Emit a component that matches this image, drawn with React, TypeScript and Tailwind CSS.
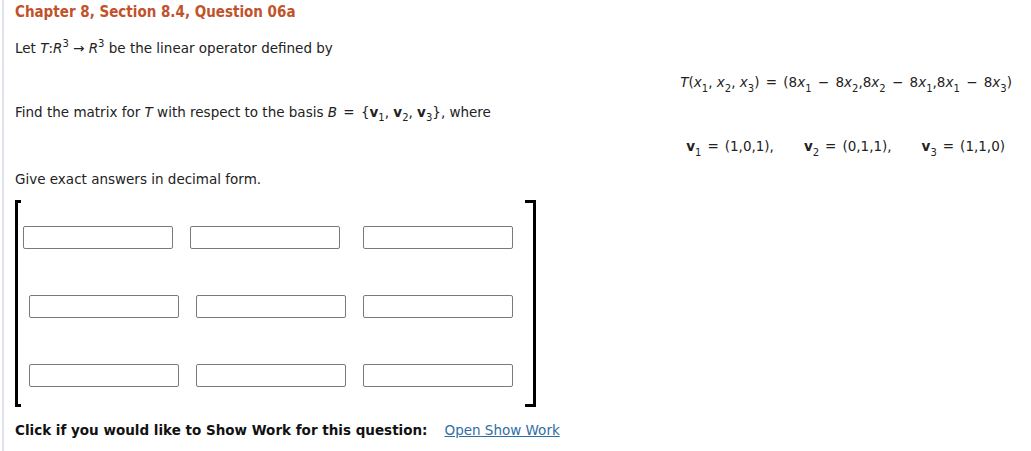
import React from "react";

const font = { fontFamily: '"DejaVu Sans", Verdana, sans-serif' };
const titleFont = { fontFamily: '"DejaVu Sans Condensed", "DejaVu Sans", Verdana, sans-serif' };

function Sub({ children }: { children: React.ReactNode }) {
  return <sub className="text-[10px] relative top-[1px] align-sub leading-none">{children}</sub>;
}
function Sup({ children }: { children: React.ReactNode }) {
  return <sup className="text-[10px] relative -top-[1px] align-super leading-none">{children}</sup>;
}
function Op({ children }: { children: React.ReactNode }) {
  return <span className="mx-[2px]">{children}</span>;
}
function Eq() {
  return <span className="mx-[6px]">=</span>;
}

function Box() {
  return <div className="w-[150px] h-[23px] border border-[#7a7a7a] rounded-[2px] bg-white shrink-0" />;
}

export default function App() {
  return (
    <div className="w-[1031px] h-[451px] bg-white overflow-hidden text-[13.5px] text-[#222]" style={font}>
      <div className="h-full ml-[2px] border-l-2 border-[#dfe2ea] pl-[11px] pr-[19px]">
        <div className="pt-[2px] h-[22px] leading-[20px] text-[15px] font-bold text-[#c0532a]" style={titleFont}>
          Chapter 8, Section 8.4, Question 06a
        </div>
        <div className="mt-[17px] leading-[18px]">
          Let <i>T</i>:<i>R</i><Sup>3</Sup> → <i>R</i><Sup>3</Sup> be the linear operator defined by
        </div>
        <div className="mt-[16px] leading-[18px] text-right">
          <i>T</i>(<i>x</i><Sub>1</Sub>, <i>x</i><Sub>2</Sub>, <i>x</i><Sub>3</Sub>) <Op>=</Op> (8<i>x</i><Sub>1</Sub> <Op>−</Op> 8<i>x</i><Sub>2</Sub>,8<i>x</i><Sub>2</Sub> <Op>−</Op> 8<i>x</i><Sub>1</Sub>,8<i>x</i><Sub>1</Sub> <Op>−</Op> 8<i>x</i><Sub>3</Sub>)
        </div>
        <div className="mt-[10px] leading-[18px]">
          Find the matrix for <i>T</i> with respect to the basis <i>B</i> <Op>=</Op> {"{"}<b>v</b><Sub>1</Sub>, <b>v</b><Sub>2</Sub>, <b>v</b><Sub>3</Sub>{"}"}, where
        </div>
        <div className="mt-[15px] leading-[18px] flex justify-end pr-[7px] gap-[30px]">
          <span><b>v</b><Sub>1</Sub><Eq />(1,0,1),</span>
          <span><b>v</b><Sub>2</Sub><Eq />(0,1,1),</span>
          <span><b>v</b><Sub>3</Sub><Eq />(1,1,0)</span>
        </div>
        <div className="mt-[13px] leading-[18px]">Give exact answers in decimal form.</div>
        <div className="mt-[12px] w-[521px] h-[207px] flex">
          <div className="w-[6px] border-l-[3px] border-y-[3px] border-black shrink-0" />
          <div className="flex-1 flex flex-col pt-[26px] gap-[46px]">
            <div className="flex">
              <div className="ml-[2px]"><Box /></div>
              <div className="ml-[17px]"><Box /></div>
              <div className="ml-[23px]"><Box /></div>
            </div>
            <div className="flex">
              <div className="ml-[8px]"><Box /></div>
              <div className="ml-[17px]"><Box /></div>
              <div className="ml-[17px]"><Box /></div>
            </div>
            <div className="flex">
              <div className="ml-[8px]"><Box /></div>
              <div className="ml-[17px]"><Box /></div>
              <div className="ml-[17px]"><Box /></div>
            </div>
          </div>
          <div className="w-[11px] border-r-[3px] border-y-[3px] border-black shrink-0" />
        </div>
        <div className="mt-[14px] leading-[18px] flex">
          <b className="text-[#111]">Click if you would like to Show Work for this question:</b>
          <a href="#" className="ml-[17px] text-[#2f6ea5] underline">Open Show Work</a>
        </div>
      </div>
    </div>
  );
}
